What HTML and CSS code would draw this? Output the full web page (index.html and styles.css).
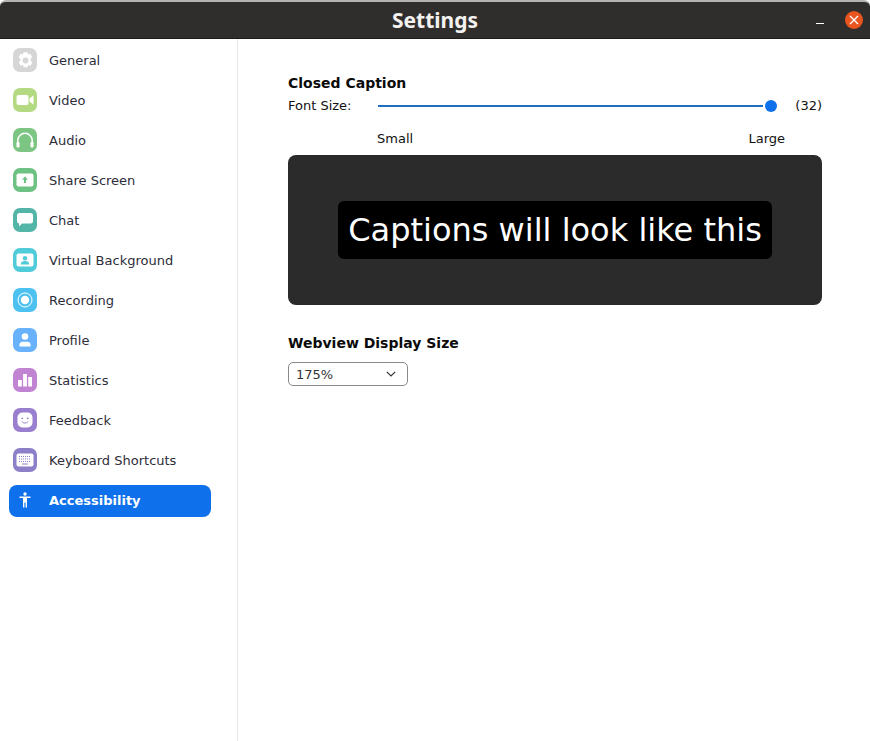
FILE: index.html
```html
<!DOCTYPE html>
<html lang="en">
<head>
  <meta charset="UTF-8">
  <meta name="viewport" content="width=device-width, initial-scale=1.0">
  <title>Settings</title>
  <link rel="stylesheet" href="styles.css">
</head>
<body>
  <div class="window">
    <header class="titlebar">
      <span class="title">Settings</span>
      <div class="window-buttons">
        <span class="minimize"></span>
        <span class="close">
          <svg width="10" height="10" viewBox="0 0 10 10"><path d="M1 1 L9 9 M9 1 L1 9" stroke="#fff" stroke-width="1.4" fill="none"/></svg>
        </span>
      </div>
    </header>

    <div class="content">
      <nav class="sidebar">
        <div class="nav-item">
          <span class="icon general">
            <svg width="19" height="19" viewBox="0 0 16 16"><path fill-rule="evenodd" fill="#fff" d="M6.4 1h3.2l.5 2 1.900-.7 1.600 2.800-1.400 1.600.1 1.300 1.400 1.600-1.600 2.800-1.900-.7-.5 2H6.400l-.5-2-1.900.7-1.600-2.800 1.400-1.600-.1-1.300L2.300 5.100l1.600-2.800 1.900.7zM8 5.500a2.500 2.500 0 1 0 0 5 2.500 2.500 0 0 0 0-5z"/></svg>
          </span>
          General
        </div>
        <div class="nav-item">
          <span class="icon video">
            <svg width="18" height="14" viewBox="0 0 18 14"><rect x="0.500" y="2" width="12" height="10" rx="2" fill="#fff"/><path d="M13.500 5.500 L17.500 2.500 V11.500 L13.500 8.500z" fill="#fff"/></svg>
          </span>
          Video
        </div>
        <div class="nav-item">
          <span class="icon audio">
            <svg width="20" height="18" viewBox="0 0 20 18"><path d="M2.800 12 V9.500 a7.200 7.200 0 0 1 14.400 0 V12" stroke="#fff" stroke-width="1.500" fill="none"/><rect x="1.500" y="11" width="3" height="5.500" rx="1.200" fill="#fff"/><rect x="15.500" y="11" width="3" height="5.500" rx="1.200" fill="#fff"/></svg>
          </span>
          Audio
        </div>
        <div class="nav-item">
          <span class="icon share">
            <svg width="18" height="14" viewBox="0 0 18 14"><rect x="0.500" y="0.500" width="17" height="13" rx="2" fill="#fff"/><path d="M9 3.500 L12 6.800 H10 V10 H8 V6.800 H6z" fill="#6cc183"/></svg>
          </span>
          Share Screen
        </div>
        <div class="nav-item">
          <span class="icon chat">
            <svg width="18" height="16" viewBox="0 0 18 16"><path d="M3.500 1 H14.500 a2.500 2.500 0 0 1 2.500 2.500 V9 a2.500 2.500 0 0 1 -2.500 2.500 H6 L3 14.500 V11.500 A2.500 2.500 0 0 1 1 9 V3.500 A2.500 2.500 0 0 1 3.500 1z" fill="#fff"/></svg>
          </span>
          Chat
        </div>
        <div class="nav-item">
          <span class="icon background">
            <svg width="18" height="14" viewBox="0 0 18 14"><rect x="0.500" y="0.500" width="17" height="13" rx="2" fill="#fff"/><circle cx="9" cy="5.300" r="2.200" fill="#4fcbd9"/><path d="M4.800 11.500 c0-2.400 1.800-3.400 4.200-3.400 s4.200 1 4.200 3.400z" fill="#4fcbd9"/></svg>
          </span>
          Virtual Background
        </div>
        <div class="nav-item">
          <span class="icon recording">
            <svg width="16" height="16" viewBox="0 0 16 16"><circle cx="8" cy="8" r="7" stroke="#fff" stroke-width="1" fill="none"/><circle cx="8" cy="8" r="4.200" fill="#fff"/></svg>
          </span>
          Recording
        </div>
        <div class="nav-item">
          <span class="icon profile">
            <svg width="14" height="16" viewBox="0 0 14 16"><circle cx="7" cy="4.500" r="3.300" fill="#fff"/><path d="M1.500 14.500 V12.500 c0-1.600 1.500-2.800 3-2.800 h5 c1.500 0 3 1.200 3 2.800 v2z" fill="#fff"/></svg>
          </span>
          Profile
        </div>
        <div class="nav-item">
          <span class="icon statistics">
            <svg width="16" height="14" viewBox="0 0 16 14"><rect x="1" y="7" width="3.800" height="6.500" fill="#fff"/><rect x="6.100" y="1" width="3.800" height="12.500" fill="#fff"/><rect x="11.200" y="4" width="3.800" height="9.500" fill="#fff"/></svg>
          </span>
          Statistics
        </div>
        <div class="nav-item">
          <span class="icon feedback">
            <svg width="16" height="16" viewBox="0 0 16 16"><rect x="0.500" y="0.500" width="15" height="15" rx="5" fill="#fff"/><circle cx="5.300" cy="6.300" r="0.900" fill="#9a7fcf"/><circle cx="10.700" cy="6.300" r="0.900" fill="#9a7fcf"/><path d="M4.800 9.500 c1.500 2 4.900 2 6.400 0" stroke="#9a7fcf" stroke-width="1" fill="none"/></svg>
          </span>
          Feedback
        </div>
        <div class="nav-item">
          <span class="icon keyboard">
            <svg width="18" height="14" viewBox="0 0 18 14"><rect x="0.500" y="0.500" width="17" height="13" rx="2" fill="#fff"/><path d="M3 3.500 H15 M3 6 H15 M3 8.500 H15" stroke="#8d7fc8" stroke-width="1" stroke-dasharray="1 1"/><path d="M6 11 H12" stroke="#8d7fc8" stroke-width="1"/></svg>
          </span>
          Keyboard Shortcuts
        </div>
        <div class="nav-item active">
          <span class="icon accessibility">
            <svg width="14" height="16" viewBox="0 0 14 16"><circle cx="7" cy="2" r="1.700" fill="#fff"/><path d="M1.500 4.500 H12.500 V6 H9 V15.500 H7.600 V10.500 H6.400 V15.500 H5 V6 H1.500z" fill="#fff"/></svg>
          </span>
          Accessibility
        </div>
      </nav>

      <main class="main">
        <h3 class="section-title">Closed Caption</h3>
        <div class="slider-row">
          <span class="slider-label">Font Size:</span>
          <div class="slider">
            <div class="slider-track"></div>
            <div class="slider-thumb"></div>
          </div>
          <span class="slider-value">(32)</span>
        </div>
        <div class="slider-ends">
          <span>Small</span>
          <span>Large</span>
        </div>
        <div class="preview">
          <span class="caption">Captions will look like this</span>
        </div>

        <h3 class="section-title webview-title">Webview Display Size</h3>
        <div class="select">
          <span>175%</span>
          <svg width="10" height="6" viewBox="0 0 10 6"><path d="M0.800 0.800 L5 5 L9.200 0.800" stroke="#333" stroke-width="1.200" fill="none"/></svg>
        </div>
      </main>
    </div>
  </div>
</body>
</html>
```

FILE: styles.css
```css
* {
  box-sizing: border-box;
  margin: 0;
  padding: 0;
}

body {
  background-color: #fff;
  color: #111;
  font-family: 'DejaVu Sans', sans-serif;
  font-size: 13px;
}

.window {
  display: flex;
  flex-direction: column;
  height: 741px;
  overflow: hidden;
}

.titlebar {
  height: 39px;
  flex-shrink: 0;
  background-color: #302e2d;
  border-top: 2px solid #b5b3b0;
  border-bottom: 1px solid #1c1b1a;
  border-radius: 6px 6px 0 0;
  display: flex;
  align-items: center;
  justify-content: center;
  position: relative;
}

.title {
  color: #f4f2f0;
  font-family: 'Noto Sans', sans-serif;
  font-size: 21px;
  font-weight: 700;
}

.window-buttons {
  position: absolute;
  right: 7px;
  top: 9px;
  display: flex;
  align-items: center;
  gap: 21px;
}

.minimize {
  width: 8px;
  height: 1px;
  margin-top: 6px;
  background-color: #fff;
}

.close {
  width: 18px;
  height: 18px;
  border-radius: 50%;
  background-color: #e9541f;
  display: flex;
  align-items: center;
  justify-content: center;
}

.content {
  flex: 1;
  display: flex;
}

.sidebar {
  width: 238px;
  flex-shrink: 0;
  border-right: 1px solid #e8e8e8;
  padding: 5px 26px 0 9px;
  display: flex;
  flex-direction: column;
  gap: 8px;
}

.nav-item {
  height: 32px;
  padding-left: 4px;
  display: flex;
  align-items: center;
  gap: 12px;
  color: #2d2d3a;
  font-size: 13px;
  border-radius: 8px;
}

.nav-item.active {
  margin-top: 1px;
  padding-bottom: 2px;
  background-color: #0e71eb;
  color: #fff;
  font-weight: 700;
}

.icon {
  width: 24px;
  height: 24px;
  border-radius: 7px;
  display: flex;
  align-items: center;
  justify-content: center;
  flex-shrink: 0;
}

.general { background-color: #d6d6d6; }
.video { background-color: #b3da82; }
.audio { background-color: #7cc583; }
.share { background-color: #6cc183; }
.chat { background-color: #52b5a7; }
.background { background-color: #4fcbd9; }
.recording { background-color: #4dc1f0; }
.profile { background-color: #67b2fb; }
.statistics { background-color: #c084d2; }
.feedback { background-color: #9a7fcf; }
.keyboard { background-color: #8d7fc8; }
.accessibility { background-color: transparent; }

.main {
  flex: 1;
  padding: 36px 48px 0 50px;
}

.section-title {
  font-size: 14px;
  font-weight: 700;
  color: #0b0b0b;
  line-height: 16px;
}

.slider-row {
  display: flex;
  align-items: center;
  height: 20px;
  margin-top: 4px;
}

.slider-label {
  width: 90px;
  flex-shrink: 0;
}

.slider {
  width: 399px;
  height: 14px;
  margin-top: 2px;
  display: flex;
  align-items: center;
}

.slider-track {
  flex: 1;
  height: 2px;
  background-color: #1f6fc0;
}

.slider-thumb {
  width: 12px;
  height: 12px;
  border-radius: 50%;
  background-color: #0e71eb;
  flex-shrink: 0;
  margin-left: 2px;
}

.slider-value {
  margin-left: auto;
}

.slider-ends {
  display: flex;
  justify-content: space-between;
  margin-top: 16px;
  padding: 0 37px 0 89px;
  line-height: 16px;
}

.preview {
  height: 150px;
  margin-top: 8px;
  background-color: #2b2b2b;
  border-radius: 8px;
  display: flex;
  align-items: center;
  justify-content: center;
}

.caption {
  background-color: #000;
  color: #fff;
  font-size: 32px;
  line-height: 58px;
  padding: 0 10px;
  border-radius: 6px;
}

.webview-title {
  margin-top: 30px;
}

.select {
  width: 120px;
  height: 24px;
  margin-top: 11px;
  padding: 0 11px 0 7px;
  border: 1px solid #8a8a8a;
  border-radius: 5px;
  color: #333;
  display: flex;
  align-items: center;
  justify-content: space-between;
}
```
